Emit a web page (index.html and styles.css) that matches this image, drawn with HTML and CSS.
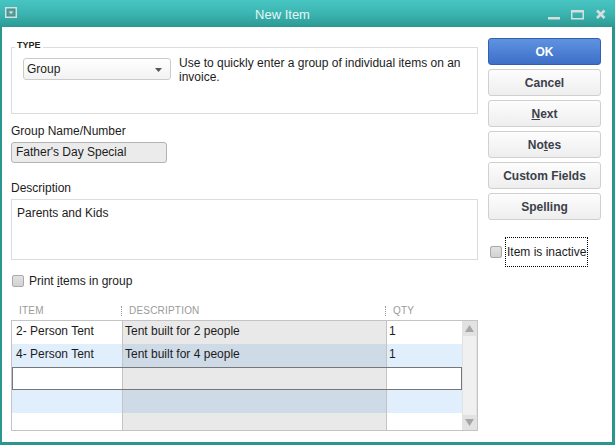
FILE: index.html
```html
<!DOCTYPE html>
<html lang="en">
<head>
    <meta charset="UTF-8">
    <meta name="viewport" content="width=device-width, initial-scale=1.0">
    <title>New Item</title>
    <link rel="stylesheet" href="styles.css">
</head>
<body>
    <div class="window">
        <div class="titlebar">
            <span class="sys-icon">
                <svg width="12" height="11" viewBox="0 0 12 11">
                    <rect x="0.75" y="0.75" width="10.5" height="9.5" fill="#3f8f8c" stroke="#d3e2e1" stroke-width="1.5"/>
                    <rect x="2.5" y="2.5" width="7" height="6" fill="#5a9e9b"/>
                    <path d="M4 4.5 L8 4.5 L6 7 Z" fill="#e6eeee"/>
                </svg>
            </span>
            <div class="title">New Item</div>
            <div class="controls">
                <svg width="58" height="27" viewBox="0 0 58 27">
                    <rect x="0" y="17" width="12" height="2.5" fill="#d6dede"/>
                    <rect x="23.75" y="10.75" width="11.5" height="8" fill="none" stroke="#d6dede" stroke-width="1.5"/>
                    <rect x="23" y="10" width="13" height="2.5" fill="#d6dede"/>
                    <path d="M49 10.5 L56.5 18 M56.5 10.5 L49 18" stroke="#d6dede" stroke-width="2.6"/>
                </svg>
            </div>
        </div>

        <div class="client">
            <div class="main">
                <fieldset class="type-box">
                    <legend>TYPE</legend>
                    <div class="type-row">
                        <div class="select">
                            <span>Group</span>
                            <svg class="select-arrow" width="7" height="4" viewBox="0 0 7 4"><path d="M0 0 L7 0 L3.5 4 Z" fill="#555"/></svg>
                        </div>
                        <p class="type-hint">Use to quickly enter a group of individual items on an invoice.</p>
                    </div>
                </fieldset>

                <div class="field-label">Group Name/Number</div>
                <div class="text-input">Father's Day Special</div>

                <div class="field-label desc-label">Description</div>
                <div class="text-area">Parents and Kids</div>

                <div class="check-row print-row">
                    <span class="check"></span>
                    <span>Print <u>i</u>tems in group</span>
                </div>

                <div class="grid-head">
                    <div class="head-cell head-item">ITEM</div>
                    <div class="head-cell head-desc"><span class="sep"></span>DESCRIPTION</div>
                    <div class="head-cell head-qty"><span class="sep"></span>QTY</div>
                </div>
                <div class="grid">
                    <div class="grid-rows">
                        <div class="row">
                            <div class="cell item">2- Person Tent</div>
                            <div class="cell desc">Tent built for 2 people</div>
                            <div class="cell qty">1</div>
                        </div>
                        <div class="row alt">
                            <div class="cell item">4- Person Tent</div>
                            <div class="cell desc">Tent built for 4 people</div>
                            <div class="cell qty">1</div>
                        </div>
                        <div class="row current">
                            <div class="cell item"></div>
                            <div class="cell desc"></div>
                            <div class="cell qty"></div>
                        </div>
                        <div class="row alt">
                            <div class="cell item"></div>
                            <div class="cell desc"></div>
                            <div class="cell qty"></div>
                        </div>
                        <div class="row">
                            <div class="cell item"></div>
                            <div class="cell desc"></div>
                            <div class="cell qty"></div>
                        </div>
                    </div>
                    <div class="scrollbar">
                        <div class="scroll-btn">
                            <svg width="9" height="7" viewBox="0 0 9 7"><path d="M0 7 L4.5 0 L9 7 Z" fill="#a6a6a6"/></svg>
                        </div>
                        <div class="scroll-track"></div>
                        <div class="scroll-btn">
                            <svg width="9" height="7" viewBox="0 0 9 7"><path d="M0 0 L9 0 L4.5 7 Z" fill="#a6a6a6"/></svg>
                        </div>
                    </div>
                </div>
            </div>

            <div class="side">
                <button class="btn btn-primary">OK</button>
                <button class="btn">Cancel</button>
                <button class="btn"><u>N</u>ext</button>
                <button class="btn">No<u>t</u>es</button>
                <button class="btn">Custom Fields</button>
                <button class="btn">Spellin<u>g</u></button>

                <div class="check-row inactive-row">
                    <span class="check"></span>
                    <span class="focus">Item is inactive</span>
                </div>
            </div>
        </div>
    </div>
</body>
</html>
```

FILE: styles.css
```css
* {
    box-sizing: border-box;
}

body {
    margin: 0;
    font-family: "Liberation Sans", Arial, sans-serif;
    font-size: 12px;
    color: #1c1c1c;
    background: #2b958f;
}

.window {
    width: 615px;
    height: 445px;
    display: flex;
    flex-direction: column;
    background: #2b958f;
}

/* title bar */
.titlebar {
    height: 27px;
    flex-shrink: 0;
    display: flex;
    align-items: center;
    padding: 0 9px 0 5px;
    background: linear-gradient(180deg, #47c5c2 0%, #3cb5b1 50%, #2c9993 100%);
}

.sys-icon {
    display: flex;
    width: 12px;
    height: 11px;
    margin-top: -3px;
}

.title {
    flex: 1;
    text-align: center;
    font-size: 13px;
    color: #e4f7f6;
    margin-top: 1px;
}

.controls {
    display: flex;
    width: 58px;
    height: 27px;
}

/* client area */
.client {
    flex: 1;
    display: flex;
    gap: 10px;
    background: #fff;
    margin: 0 3px 3px 2px;
    padding: 11px 11px 0 9px;
}

.main {
    width: 467px;
}

.side {
    width: 113px;
    display: flex;
    flex-direction: column;
}

/* type box */
.type-box {
    margin: 2px 0 0;
    padding: 2px 11px 0;
    min-width: 0;
    width: 467px;
    border: 1px solid #dcdcdc;
}

.type-box legend {
    font-size: 9px;
    font-weight: bold;
    line-height: 10px;
    padding: 0 2px 4px;
    margin-left: -8px;
    color: #222;
}

.type-row {
    height: 57px;
    display: flex;
    align-items: flex-start;
    gap: 8px;
}

.select {
    width: 148px;
    height: 22px;
    margin-top: 2px;
    display: flex;
    align-items: center;
    padding: 0 8px 0 3px;
    border: 1px solid #cbcbcb;
    border-radius: 3px;
    background: linear-gradient(180deg, #ffffff 0%, #f2f2f2 100%);
    flex-shrink: 0;
}

.select-arrow {
    margin-left: auto;
    margin-top: 1px;
}

.type-hint {
    flex: 1;
    margin: 0;
    line-height: 14px;
}

/* fields */
.field-label {
    margin-top: 10px;
    line-height: 14px;
}

.desc-label {
    margin-top: 18px;
}

.text-input {
    margin-top: 4px;
    width: 156px;
    height: 21px;
    line-height: 19px;
    padding-left: 4px;
    border: 1px solid #b3b3b3;
    border-radius: 3px;
    background: #ebebeb;
}

.text-area {
    margin-top: 4px;
    height: 61px;
    padding: 6px 5px;
    line-height: 14px;
    border: 1px solid #dcdcdc;
}

.check-row {
    display: flex;
    align-items: center;
}

.check {
    width: 12px;
    height: 12px;
    border: 1px solid #a9a9a9;
    border-radius: 2px;
    background: linear-gradient(180deg, #e2e2e2 0%, #d2d2d2 100%);
    flex-shrink: 0;
}

.print-row {
    margin-top: 14px;
    height: 14px;
    padding-left: 1px;
    gap: 5px;
}

/* items grid */
.grid-head {
    margin-top: 16px;
    height: 16px;
    display: flex;
    font-size: 10px;
    line-height: 14px;
    color: #9a9a9a;
    letter-spacing: 0.2px;
}

.head-cell {
    display: flex;
    align-items: center;
    height: 14px;
}

.head-item {
    width: 110px;
    padding-left: 8px;
}

.head-desc {
    width: 264px;
}

.sep {
    width: 0;
    height: 10px;
    border-left: 1px dotted #9a9a9a;
    margin-right: 7px;
}

.grid {
    height: 111px;
    display: flex;
    border: 1px solid #c4c4c4;
}

.grid-rows {
    width: 450px;
    overflow: hidden;
}

.row {
    display: flex;
    height: 23px;
    line-height: 21px;
}

.cell {
    height: 100%;
    white-space: nowrap;
}

.item {
    width: 111px;
    padding-left: 4px;
    background: #fff;
    border-right: 1px solid #c4c4c4;
}

.desc {
    width: 264px;
    padding-left: 2px;
    background: #e9e9e9;
    border-right: 1px solid #c4c4c4;
}

.qty {
    width: 75px;
    padding-left: 2px;
    background: #fff;
}

.row.alt .item,
.row.alt .qty {
    background: #e1eefc;
}

.row.alt .desc {
    background: #cfdae7;
}

.row.current {
    outline: 1px solid #777;
    outline-offset: -1px;
    position: relative;
}

.scrollbar {
    width: 15px;
    display: flex;
    flex-direction: column;
    background: #f0f0f0;
}

.scroll-btn {
    height: 15px;
    display: flex;
    align-items: center;
    justify-content: center;
    background: #e2e2e2;
}

.scroll-track {
    flex: 1;
    border-left: 1px solid #e2e2e2;
    border-right: 1px solid #e2e2e2;
}

/* buttons */
.btn {
    height: 27px;
    margin: 0 0 4px;
    padding: 0;
    font-family: "Liberation Sans", Arial, sans-serif;
    font-size: 12px;
    font-weight: bold;
    color: #3b404a;
    border: 1px solid #d0d0d0;
    border-radius: 3px;
    background: linear-gradient(180deg, #fdfdfd 0%, #eeeeee 100%);
}

.btn-primary {
    color: #fff;
    border-color: #3560b0;
    background: linear-gradient(180deg, #5f93e0 0%, #3d6fc8 100%);
}

.inactive-row {
    margin-top: 13px;
    height: 30px;
    padding-left: 2px;
    gap: 3px;
}

.focus {
    height: 30px;
    line-height: 28px;
    padding: 0 1px;
    border: 1px dotted #000;
}
```
